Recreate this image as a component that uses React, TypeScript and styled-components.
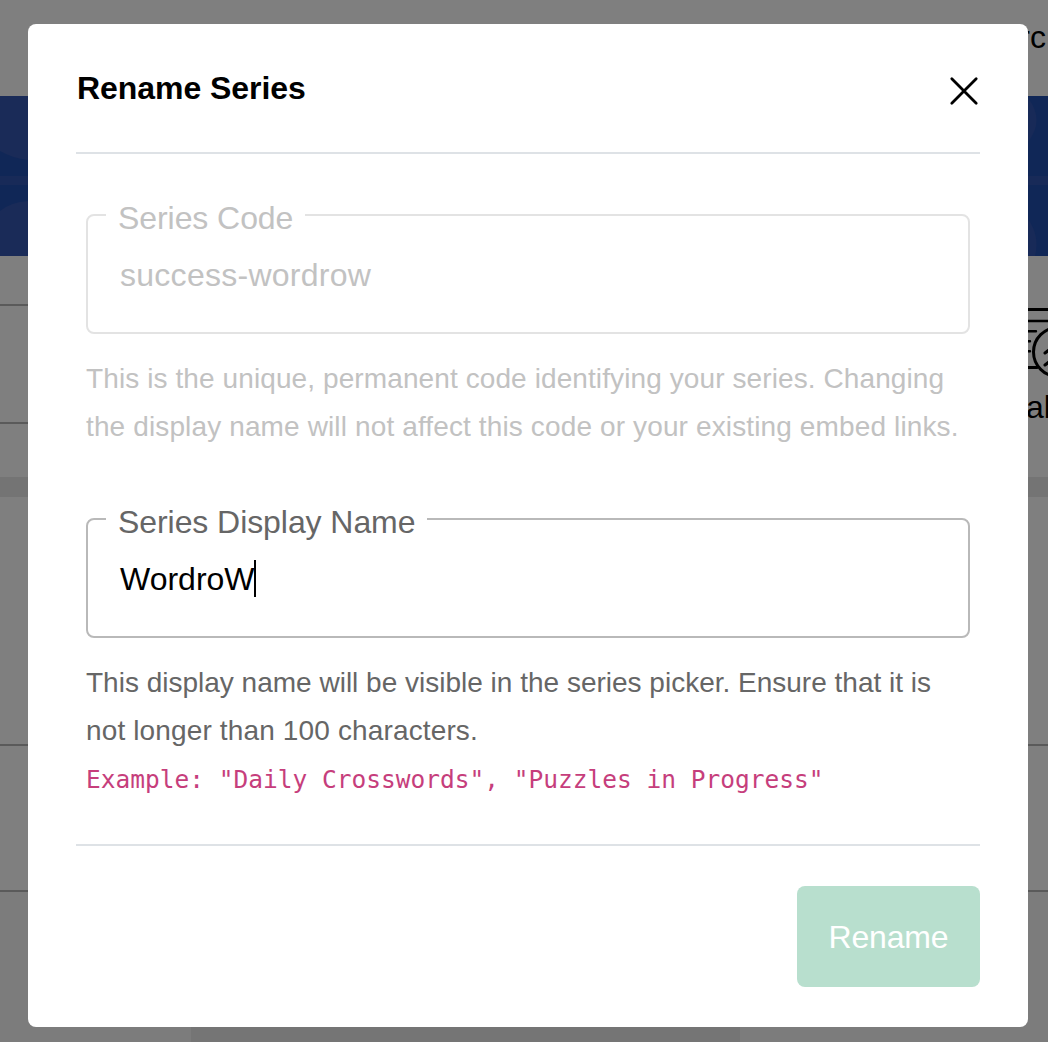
import React from "react";
import styled, { createGlobalStyle } from "styled-components";

const GlobalStyle = createGlobalStyle`
  *, *::before, *::after { box-sizing: border-box; }
  html, body { margin: 0; padding: 0; height: 1042px; overflow: hidden; }
  body, button {
    font-family: "Liberation Sans", Arial, sans-serif;
    font-size: 32px;
  }
`;

const Screen = styled.div`
  position: relative;
  width: 1048px;
  height: 1042px;
  overflow: hidden;
  background: #fff;
`;

const Page = styled.div`
  display: flex;
  flex-direction: column;
  height: 1042px;
`;

const TopBar = styled.header`
  display: flex;
  justify-content: flex-end;
  height: 96px;
  padding: 19px 2px 0 0;
  line-height: 36px;
`;

const Banner = styled.svg`
  display: block;
  flex: none;
`;

const Toolbar = styled.section`
  display: flex;
  justify-content: space-between;
  height: 221px;
  padding-top: 48px;
`;

const SearchBox = styled.div`
  width: 400px;
  height: 120px;
  border: solid #b4b4b4;
  border-width: 2px 0;
`;

const Shortcut = styled.div`
  display: flex;
  flex-direction: column;
  width: 22px;
  white-space: nowrap;
  line-height: 38px;
`;

const Band = styled.div`
  height: 20px;
  background: #e8e8e8;
`;

const ListRow = styled.div<{ $height: number }>`
  height: ${(p) => p.$height}px;
  border-bottom: 2px solid #b4b4b4;
`;

const ListFooter = styled.div`
  display: flex;
  flex: 1;
  align-items: flex-end;
  padding-left: 191px;
  background: #f8f8f8;
`;

const FooterTile = styled.div`
  width: 549px;
  height: 40px;
  background: #ebebeb;
`;

const Scrim = styled.div`
  position: absolute;
  inset: 0;
  padding: 24px 20px 15px 28px;
  background: rgba(0, 0, 0, 0.5);
`;

const Dialog = styled.div`
  display: flex;
  flex-direction: column;
  height: 1003px;
  padding: 0 48px 40px;
  border-radius: 8px;
  background: #fff;
`;

const DialogHeader = styled.div`
  display: flex;
  justify-content: space-between;
  height: 130px;
  padding-top: 46px;
  border-bottom: 2px solid #dee2e6;
`;

const Title = styled.h2`
  margin: 0;
  padding-left: 1px;
  font-size: 32px;
  line-height: 36px;
  font-weight: 700;
  letter-spacing: -0.05px;
`;

const CloseButton = styled.button`
  display: flex;
  align-items: center;
  justify-content: center;
  width: 32px;
  height: 42px;
  padding: 0;
  border: 0;
  background: none;
`;

const DialogBody = styled.div`
  display: flex;
  flex-direction: column;
  height: 692px;
  padding: 42px 10px 0;
  border-bottom: 2px solid #dee2e6;
`;

const Field = styled.fieldset<{ $disabled?: boolean }>`
  height: 138px;
  min-width: 0;
  margin: 0;
  padding: 15px 32px 0 18px;
  border: 2px solid ${(p) => (p.$disabled ? "#e3e3e3" : "#b9b9b9")};
  border-radius: 8px;
  color: ${(p) => (p.$disabled ? "#c2c2c2" : "#000")};
`;

const Legend = styled.legend<{ $disabled?: boolean }>`
  padding: 6px 12px 0;
  line-height: 32px;
  letter-spacing: -0.07px;
  color: ${(p) => (p.$disabled ? "#c2c2c2" : "#666")};
`;

const Value = styled.div<{ $spacing?: number }>`
  display: flex;
  align-items: center;
  height: 52px;
  padding-left: 14px;
  line-height: 36px;
  letter-spacing: ${(p) => p.$spacing ?? 0}px;
`;

const Caret = styled.span`
  width: 2px;
  height: 37px;
  margin: -1px 0 0 -1px;
  background: #000;
`;

const Help = styled.div<{ $disabled?: boolean }>`
  display: flex;
  flex-direction: column;
  margin-top: 21px;
  font-size: 28px;
  line-height: 48px;
  white-space: nowrap;
  color: ${(p) => (p.$disabled ? "#c2c2c2" : "#666")};
`;

const HelpLine = styled.span<{ $spacing?: number }>`
  letter-spacing: ${(p) => p.$spacing ?? 0}px;
`;

const Example = styled.code`
  font-family: "DejaVu Sans Mono", monospace;
  font-size: 24.5px;
  line-height: 50px;
  color: #c63e7c;
`;

const Spacer = styled.div`
  height: 49px;
  flex: none;
`;

const DialogFooter = styled.div`
  display: flex;
  justify-content: flex-end;
  padding-top: 40px;
`;

const RenameButton = styled.button`
  width: 183px;
  height: 101px;
  padding: 2px 0 0;
  border: 0;
  border-radius: 8px;
  background: #b8dfce;
  color: #fff;
  letter-spacing: -0.2px;
`;

const BannerArt = () => (
  <Banner width="1048" height="160" viewBox="0 0 1048 160">
    <rect width="1048" height="160" fill="#204eae" />
    <rect y="80" width="1048" height="9" fill="#3054b0" />
    <g fill="#3456b0">
      <path d="M0 0H28V64Q12 62 0 55Z" />
      <path d="M0 115Q11 106 28 105V160H0Z" />
    </g>
    <g fill="#3054b0">
      <path d="M1028 2Q1045 24 1028 46Z" />
      <path d="M1028 123Q1040 140 1035 160H1028Z" />
    </g>
  </Banner>
);

const BillingIcon = () => (
  <svg width="22" height="84" viewBox="1026 304 22 84" fill="none" stroke="#000" strokeLinecap="round">
    <path d="M1020 309.5H1050" strokeWidth="3" />
    <path d="M1020 321H1050M1020 331.3H1036M1020 341.3H1030M1020 351.3H1030" strokeWidth="2.4" />
    <path d="M1020 367.5H1037" strokeWidth="3" />
    <circle cx="1058" cy="352" r="24.5" strokeWidth="3" />
    <path d="M1045 353L1049 350M1045 365L1049 362" strokeWidth="3" />
  </svg>
);

export default function App() {
  return (
    <Screen>
      <GlobalStyle />
      <Page>
        <TopBar>Searc</TopBar>
        <BannerArt />
        <Toolbar>
          <SearchBox />
          <Shortcut>
            <BillingIcon />
            al
          </Shortcut>
        </Toolbar>
        <Band />
        <ListRow $height={249} />
        <ListRow $height={146} />
        <ListFooter>
          <FooterTile />
        </ListFooter>
      </Page>
      <Scrim>
        <Dialog role="dialog">
          <DialogHeader>
            <Title>Rename Series</Title>
            <CloseButton aria-label="Close">
              <svg width="32" height="32" viewBox="0 0 32 32" stroke="#000" strokeWidth="2.8" strokeLinecap="round">
                <path d="M3.8 3.8L28.2 28.2M28.2 3.8L3.8 28.2" />
              </svg>
            </CloseButton>
          </DialogHeader>
          <DialogBody>
            <Field $disabled>
              <Legend $disabled>Series Code</Legend>
              <Value $spacing={0.27}>success-wordrow</Value>
            </Field>
            <Help $disabled>
              <HelpLine $spacing={0.1}>
                This is the unique, permanent code identifying your series. Changing
              </HelpLine>
              <HelpLine $spacing={0.13}>
                the display name will not affect this code or your existing embed links.
              </HelpLine>
            </Help>
            <Spacer />
            <Field>
              <Legend>Series Display Name</Legend>
              <Value>
                WordroW
                <Caret />
              </Value>
            </Field>
            <Help>
              <HelpLine>This display name will be visible in the series picker. Ensure that it is</HelpLine>
              <HelpLine $spacing={0.14}>not longer than 100 characters.</HelpLine>
              <Example>Example: "Daily Crosswords", "Puzzles in Progress"</Example>
            </Help>
          </DialogBody>
          <DialogFooter>
            <RenameButton>Rename</RenameButton>
          </DialogFooter>
        </Dialog>
      </Scrim>
    </Screen>
  );
}
